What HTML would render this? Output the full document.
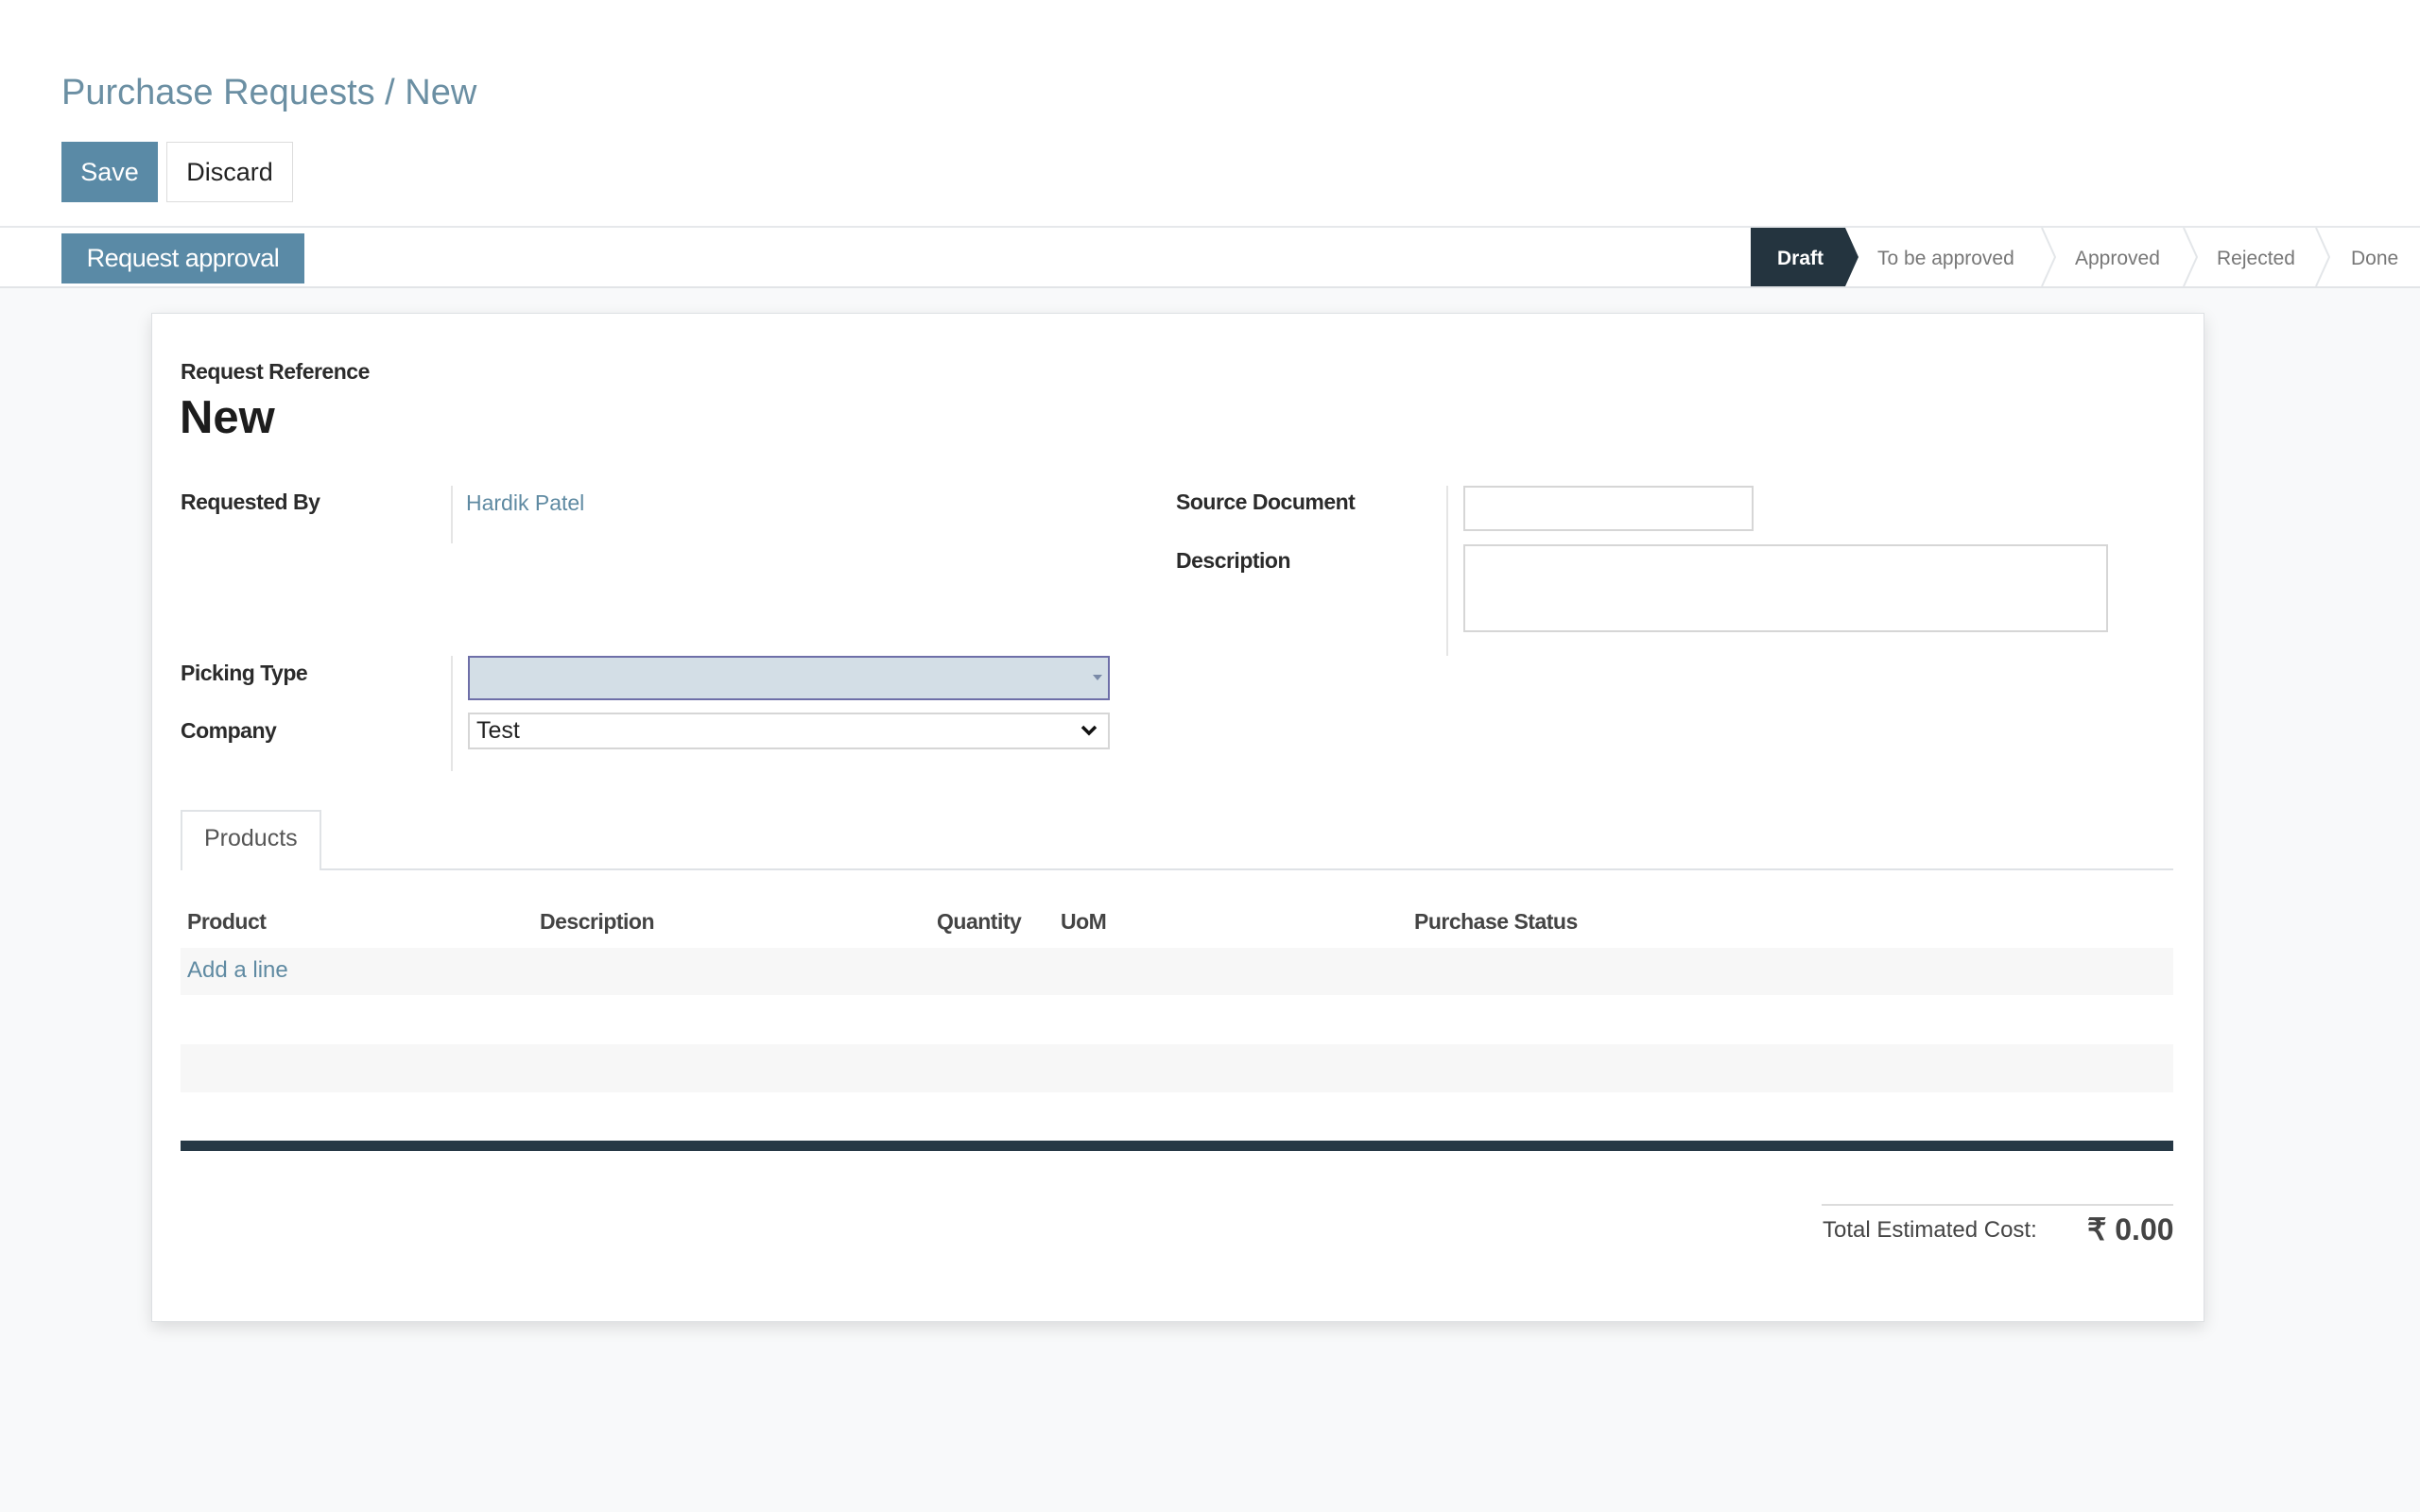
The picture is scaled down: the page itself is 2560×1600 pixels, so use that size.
<!DOCTYPE html>
<html><head><meta charset="utf-8"><style>
*{margin:0;padding:0;box-sizing:border-box}
body{width:2560px;height:1600px;position:relative;background:#f8f9fa;font-family:"Liberation Sans",sans-serif;overflow:hidden;color:#222}
.a{position:absolute;white-space:nowrap}
.lbl{font-size:23px;font-weight:bold;color:#2b2b2b;letter-spacing:-0.5px}
.th{font-size:23px;font-weight:bold;color:#444;letter-spacing:-0.5px}
</style></head><body>
<div class="a" style="left:0;top:0;width:2560px;height:304px;background:#fff"></div>
<div class="a" style="left:65px;top:77px;font-size:38px;color:#6b8fa3">Purchase Requests / New</div>
<div class="a" style="left:65px;top:150px;width:102px;height:64px;background:#5a8aa6;color:#fff;font-size:27px;line-height:64px;text-align:center">Save</div>
<div class="a" style="left:176px;top:150px;width:134px;height:64px;background:#fff;border:1px solid #dcdcdc;color:#222;font-size:27px;line-height:62px;text-align:center">Discard</div>
<div class="a" style="left:0;top:239px;width:2560px;height:2px;background:#e6e8eb"></div>
<div class="a" style="left:0;top:303px;width:2560px;height:2px;background:#e2e4e7"></div>
<div class="a" style="left:65px;top:247px;width:257px;height:53px;background:#5a8aa6;color:#fff;font-size:27px;line-height:53px;text-align:center;letter-spacing:-0.5px">Request approval</div>
<svg class="a" style="left:1840px;top:241px" width="720" height="62">
<polygon points="12,0 112,0 126,31 112,62 12,62" fill="#24343f"/>
<g fill="none" stroke="#e3e6e9" stroke-width="2">
<polyline points="320,0 334,31 320,62"/><polyline points="470,0 484,31 470,62"/><polyline points="610,0 624,31 610,62"/></g>
<g font-family="Liberation Sans" font-size="21" fill="#777">
<text x="40" y="39" fill="#fff" font-weight="bold">Draft</text>
<text x="146" y="39">To be approved</text>
<text x="355" y="39">Approved</text>
<text x="505" y="39">Rejected</text>
<text x="647" y="39">Done</text></g>
</svg>
<div class="a" style="left:160px;top:331px;width:2172px;height:1068px;background:#fff;border:1px solid #dde0e3;box-shadow:0 6px 16px rgba(0,0,0,0.12)"></div>
<div class="a lbl" style="left:191px;top:380px">Request Reference</div>
<div class="a" style="left:190px;top:414px;font-size:49px;font-weight:bold;color:#1c1c1c">New</div>
<div class="a lbl" style="left:191px;top:518px">Requested By</div>
<div class="a" style="left:477px;top:514px;width:2px;height:61px;background:#e5e5e5"></div>
<div class="a" style="left:493px;top:519px;font-size:23px;color:#5f8aa2">Hardik Patel</div>
<div class="a lbl" style="left:1244px;top:518px">Source Document</div>
<div class="a lbl" style="left:1244px;top:580px">Description</div>
<div class="a" style="left:1530px;top:514px;width:2px;height:180px;background:#e5e5e5"></div>
<div class="a" style="left:1548px;top:514px;width:307px;height:48px;border:2px solid #d6d6d6;background:#fff"></div>
<div class="a" style="left:1548px;top:576px;width:682px;height:93px;border:2px solid #d6d6d6;background:#fff"></div>
<div class="a lbl" style="left:191px;top:699px">Picking Type</div>
<div class="a lbl" style="left:191px;top:760px">Company</div>
<div class="a" style="left:477px;top:694px;width:2px;height:122px;background:#e5e5e5"></div>
<div class="a" style="left:495px;top:694px;width:679px;height:47px;background:#d3dee6;border:2px solid #6e6fa8"></div>
<div class="a" style="left:1156px;top:714px;width:0;height:0;border-left:5px solid transparent;border-right:5px solid transparent;border-top:6px solid #7a8aa8"></div>
<div class="a" style="left:495px;top:754px;width:679px;height:39px;background:#fff;border:2px solid #d6d6d6"></div>
<div class="a" style="left:504px;top:759px;font-size:25px;color:#222">Test</div>
<svg class="a" style="left:1142px;top:766px" width="20" height="14"><polyline points="3,3 10,10 17,3" fill="none" stroke="#111" stroke-width="3.5"/></svg>
<div class="a" style="left:191px;top:919px;width:2108px;height:2px;background:#dfe2e6"></div>
<div class="a" style="left:191px;top:857px;width:149px;height:64px;background:#fff;border:2px solid #e0e3e6;border-bottom:none"></div>
<div class="a" style="left:216px;top:873px;font-size:25px;color:#555">Products</div>
<div class="a th" style="left:198px;top:962px">Product</div>
<div class="a th" style="left:571px;top:962px">Description</div>
<div class="a th" style="left:991px;top:962px">Quantity</div>
<div class="a th" style="left:1122px;top:962px">UoM</div>
<div class="a th" style="left:1496px;top:962px">Purchase Status</div>
<div class="a" style="left:191px;top:1003px;width:2108px;height:50px;background:#f7f7f7"></div>
<div class="a" style="left:198px;top:1013px;font-size:24px;color:#5f8aa2">Add a line</div>
<div class="a" style="left:191px;top:1105px;width:2108px;height:51px;background:#f7f7f7"></div>
<div class="a" style="left:191px;top:1207px;width:2108px;height:11px;background:#263845"></div>
<div class="a" style="left:1927px;top:1274px;width:372px;height:2px;background:#dcdcdc"></div>
<div class="a" style="left:1928px;top:1288px;font-size:24px;color:#444">Total Estimated Cost:</div>
<div class="a" style="left:2208px;top:1282px;font-size:32px;font-weight:bold;color:#444">₹ 0.00</div>
</body></html>
